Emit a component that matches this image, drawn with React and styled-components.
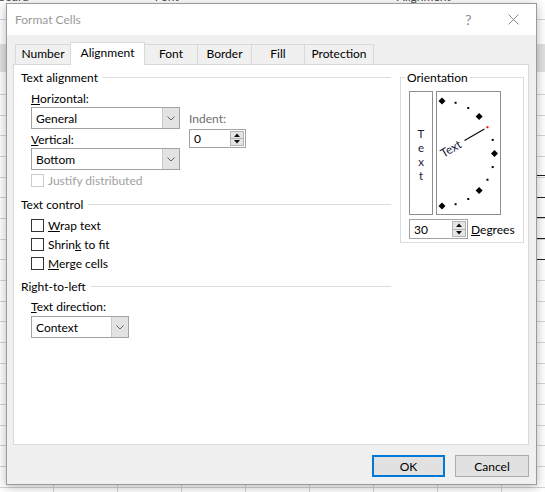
import React from 'react';
import styled, { createGlobalStyle } from 'styled-components';

const GlobalStyle = createGlobalStyle`
  html, body {
    margin: 0;
    padding: 0;
  }
  body {
    font-family: Lato, "Noto Sans", sans-serif;
    font-size: 12px;
    color: #000;
  }
`;

const cellLine = 'linear-gradient(#1e1e1e, #1e1e1e)';

// worksheet behind the dialog: header band, grid lines and a few bordered cells
const Sheet = styled.div`
  width: 545px;
  height: 492px;
  overflow: hidden;
  background-color: #fff;
  background-image:
    ${cellLine}, ${cellLine}, ${cellLine}, ${cellLine}, ${cellLine},
    linear-gradient(#e1e1e1, #e1e1e1),
    linear-gradient(#d4d4d4, #d4d4d4),
    repeating-linear-gradient(to bottom, #d4d4d4 0 1px, transparent 1px 20.67px),
    repeating-linear-gradient(to right, transparent 0 53px, #d4d4d4 53px 54px, transparent 54px 64px);
  background-size:
    9px 1px, 9px 1px, 9px 1px, 9px 1px, 9px 1px,
    100% 28px,
    100% 1px,
    100% 420px,
    100% 420px;
  background-position:
    537px 175px, 537px 197px, 537px 217px, 537px 238px, 537px 259px,
    0 44px,
    0 19px,
    0 94px,
    0 72px;
  background-repeat: no-repeat;
`;

const Ribbon = styled.div`
  height: 3px;
  overflow: hidden;
  display: flex;
  align-items: flex-start;
`;

const GroupLabel = styled.span`
  margin-left: ${(p) => p.$gap}px;
  margin-top: -10px;
  line-height: 14px;
  color: #444;
  white-space: nowrap;
`;

const Dialog = styled.div`
  margin-left: 6px;
  width: 531px;
  height: 482px;
  box-sizing: border-box;
  background: #f0f0f0;
  border: 1px solid #9b9b9b;
  box-shadow: 0 2px 10px rgba(0, 0, 0, 0.28);
  display: flex;
  flex-direction: column;
`;

const TitleBar = styled.div`
  height: 31px;
  background: #fff;
  display: flex;
  align-items: center;
  padding-left: 8px;
`;

const Title = styled.div`
  flex: 1;
  color: #999;
  font-size: 12px;
  margin-top: -1px;
`;

const CaptionButton = styled.div`
  width: 45px;
  height: 100%;
  display: flex;
  align-items: center;
  justify-content: center;
  color: #8a8a8a;
  font-size: 14px;
`;

const Body = styled.div`
  flex: 1;
  display: flex;
  flex-direction: column;
  padding: 7px 7px 0 6px;
`;

const TabRow = styled.div`
  display: flex;
  align-items: flex-end;
  height: 22px;
  padding-left: 2px;
`;

const Tab = styled.div`
  position: relative;
  box-sizing: border-box;
  width: ${(p) => p.$w}px;
  height: ${(p) => (p.$active ? 23 : 20)}px;
  margin-right: -1px;
  margin-bottom: ${(p) => (p.$active ? -1 : 0)}px;
  z-index: ${(p) => (p.$active ? 1 : 0)};
  background: ${(p) => (p.$active ? '#fff' : '#f0f0f0')};
  border: 1px solid #d9d9d9;
  border-bottom: none;
  display: flex;
  justify-content: center;
  padding-top: ${(p) => (p.$active ? 2 : 1)}px;
  line-height: 15px;
`;

const Panel = styled.div`
  height: 381px;
  box-sizing: border-box;
  background: #fff;
  border: 1px solid #d9d9d9;
  display: flex;
  padding: 5px 0 0 7px;
`;

const LeftCol = styled.div`
  width: 370px;
  display: flex;
  flex-direction: column;
`;

const SectionHead = styled.div`
  display: flex;
  align-items: center;
  line-height: 15px;
  margin-top: ${(p) => p.$top || 0}px;
`;

const Rule = styled.div`
  flex: 1;
  height: 1px;
  margin-left: 5px;
  background: #dcdcdc;
`;

const Indented = styled.div`
  padding-left: 10px;
  display: flex;
  flex-direction: column;
`;

const FieldLabel = styled.div`
  line-height: 15px;
  margin-top: ${(p) => p.$top || 0}px;
  color: ${(p) => p.$color || '#000'};
`;

const Key = styled.span`
  text-decoration: underline;
  text-underline-offset: 1px;
`;

const AlignRow = styled.div`
  display: flex;
`;

const Stack = styled.div`
  display: flex;
  flex-direction: column;
  margin-left: ${(p) => p.$left || 0}px;
`;

const Select = styled.div`
  box-sizing: border-box;
  width: ${(p) => p.$w}px;
  height: 22px;
  margin-top: ${(p) => p.$top || 0}px;
  border: 1px solid #a3a3a3;
  background: #fff;
  display: flex;
  align-items: center;
`;

const SelectValue = styled.div`
  flex: 1;
  padding-left: 4px;
`;

const SelectArrow = styled.div`
  width: 16px;
  height: 100%;
  background: #e3e3e3;
  border-left: 1px solid #c9c9c9;
  display: flex;
  align-items: center;
  justify-content: center;
`;

const Spinner = styled.div`
  box-sizing: border-box;
  width: ${(p) => p.$w}px;
  height: ${(p) => p.$h}px;
  margin-top: ${(p) => p.$top || 0}px;
  border: 1px solid #a3a3a3;
  background: #fff;
  display: flex;
  align-items: center;
  padding: 1px;
`;

const SpinValue = styled.div`
  flex: 1;
  padding-left: 3px;
`;

const SpinButtons = styled.div`
  width: 14px;
  height: 100%;
  display: flex;
  flex-direction: column;
`;

const SpinButton = styled.div`
  flex: 1;
  box-sizing: border-box;
  background: #e5e5e5;
  border: 1px solid #b4b4b4;
  margin-top: ${(p) => (p.$down ? -1 : 0)}px;
  display: flex;
  align-items: center;
  justify-content: center;
`;

const CheckRow = styled.div`
  display: flex;
  align-items: center;
  height: 15px;
  margin-top: ${(p) => p.$top || 0}px;
  color: ${(p) => (p.$disabled ? '#a0a0a0' : '#000')};
`;

const CheckBox = styled.div`
  box-sizing: border-box;
  width: 13px;
  height: 13px;
  border: 1px solid ${(p) => (p.$disabled ? '#cccccc' : '#333')};
  background: #fff;
  margin-right: 4px;
`;

const Orientation = styled.fieldset`
  box-sizing: border-box;
  width: 121px;
  margin: 0 0 0 9px;
  padding: 0 8px 3px;
  border: 1px solid #dcdcdc;
  align-self: flex-start;
`;

const Legend = styled.legend`
  padding: 0 2px;
  margin-left: -4px;
  line-height: 15px;
`;

const DialRow = styled.div`
  display: flex;
  gap: 3px;
  margin-top: 6px;
`;

const VerticalBox = styled.div`
  box-sizing: border-box;
  width: 24px;
  height: 124px;
  border: 1px solid #8e8e8e;
  display: flex;
  flex-direction: column;
  align-items: center;
  justify-content: center;
  padding-top: 3px;
  font-size: 11.5px;
  line-height: 14px;
  color: #1a1a40;
`;

const DialBox = styled.div`
  box-sizing: border-box;
  width: 65px;
  height: 124px;
  border: 1px solid #8e8e8e;
`;

const DegreesRow = styled.div`
  display: flex;
  align-items: center;
  margin-top: 4px;
  gap: 3px;
`;

const Footer = styled.div`
  display: flex;
  justify-content: flex-end;
  gap: 10px;
  padding-top: 10px;
`;

const Button = styled.div`
  box-sizing: border-box;
  width: ${(p) => (p.$default ? 73 : 74)}px;
  height: 22px;
  background: #e1e1e1;
  border: ${(p) => (p.$default ? '2px solid #0078d7' : '1px solid #adadad')};
  display: flex;
  align-items: center;
  justify-content: center;
`;

const Chevron = () => (
  <svg width="8" height="5" viewBox="0 0 8 5">
    <polyline points="0.5,0.5 4,4 7.5,0.5" fill="none" stroke="#606060" strokeWidth="1" />
  </svg>
);

const Triangle = ({ down }) => (
  <svg width="6" height="4" viewBox="0 0 6 4">
    <polygon points={down ? '0,0 6,0 3,3.5' : '3,0.5 6,4 0,4'} fill="#111" />
  </svg>
);

function Dropdown({ value, width, top }) {
  return (
    <Select $w={width} $top={top}>
      <SelectValue>{value}</SelectValue>
      <SelectArrow>
        <Chevron />
      </SelectArrow>
    </Select>
  );
}

function SpinBox({ value, width, height, top }) {
  return (
    <Spinner $w={width} $h={height} $top={top}>
      <SpinValue>{value}</SpinValue>
      <SpinButtons>
        <SpinButton>
          <Triangle />
        </SpinButton>
        <SpinButton $down>
          <Triangle down />
        </SpinButton>
      </SpinButtons>
    </Spinner>
  );
}

function Check({ children, top, disabled }) {
  return (
    <CheckRow $top={top} $disabled={disabled}>
      <CheckBox $disabled={disabled} />
      <span>{children}</span>
    </CheckRow>
  );
}

// half-circle dial: big diamonds every 45°, small dots every 15°, current angle in red
function Dial({ degrees }) {
  const cx = 5;
  const cy = 61.5;
  const r = 52.5;
  const marks = [];
  for (let a = 90; a >= -90; a -= 15) {
    const rad = (a * Math.PI) / 180;
    const x = cx + r * Math.cos(rad);
    const y = cy - r * Math.sin(rad);
    if (a % 45 === 0) {
      marks.push(
        <polygon
          key={a}
          points={`${x},${y - 3.5} ${x + 3.5},${y} ${x},${y + 3.5} ${x - 3.5},${y}`}
          fill="#000"
        />
      );
    } else {
      marks.push(
        <rect key={a} x={x - 1} y={y - 1} width="2" height="2" fill={a === degrees ? '#ff0000' : '#000'} />
      );
    }
  }
  return (
    <svg width="63" height="122" viewBox="0 0 63 122">
      {marks}
      <g transform={`rotate(${-degrees} ${cx} ${cy})`}>
        <text x={cx - 1} y={cy + 4.5} fontSize="12" fontFamily="Lato, sans-serif" fill="#1a1a40">
          Text
        </text>
        <line x1={cx + 26} y1={cy} x2={cx + 49} y2={cy} stroke="#000" strokeWidth="1" />
      </g>
    </svg>
  );
}

const tabs = [
  ['Number', 56],
  ['Alignment', 75],
  ['Font', 54],
  ['Border', 55],
  ['Fill', 54],
  ['Protection', 70],
];

export default function App() {
  return (
    <Sheet>
      <GlobalStyle />
      <Ribbon>
        <GroupLabel $gap={-22}>Clipboard</GroupLabel>
        <GroupLabel $gap={126}>Font</GroupLabel>
        <GroupLabel $gap={218}>Alignment</GroupLabel>
      </Ribbon>
      <Dialog>
        <TitleBar>
          <Title>Format Cells</Title>
          <CaptionButton>?</CaptionButton>
          <CaptionButton>
            <svg width="11" height="11" viewBox="0 0 11 11">
              <path d="M0.5 0.5 L10.5 10.5 M10.5 0.5 L0.5 10.5" stroke="#8a8a8a" strokeWidth="1" />
            </svg>
          </CaptionButton>
        </TitleBar>
        <Body>
          <TabRow>
            {tabs.map(([label, w]) => (
              <Tab key={label} $w={w} $active={label === 'Alignment'}>
                {label}
              </Tab>
            ))}
          </TabRow>
          <Panel>
            <LeftCol>
              <SectionHead>
                Text alignment
                <Rule />
              </SectionHead>
              <Indented>
                <AlignRow>
                  <Stack>
                    <FieldLabel $top={6}>
                      <Key>H</Key>orizontal:
                    </FieldLabel>
                    <Dropdown value="General" width={149} top={1} />
                    <FieldLabel $top={3}>
                      <Key>V</Key>ertical:
                    </FieldLabel>
                    <Dropdown value="Bottom" width={149} top={1} />
                  </Stack>
                  <Stack $left={9}>
                    <FieldLabel $top={26} $color="#6d6d6d">
                      Indent:
                    </FieldLabel>
                    <SpinBox value="0" width={57} height={19} top={3} />
                  </Stack>
                </AlignRow>
                <Check top={3} disabled>
                  Justify distributed
                </Check>
              </Indented>

              <SectionHead $top={9}>
                Text control
                <Rule />
              </SectionHead>
              <Indented>
                <Check top={6}>
                  <Key>W</Key>rap text
                </Check>
                <Check top={4}>
                  Shrin<Key>k</Key> to fit
                </Check>
                <Check top={4}>
                  <Key>M</Key>erge cells
                </Check>
              </Indented>

              <SectionHead $top={8}>
                Right-to-left
                <Rule />
              </SectionHead>
              <Indented>
                <FieldLabel $top={5}>
                  <Key>T</Key>ext direction:
                </FieldLabel>
                <Dropdown value="Context" width={98} top={2} />
              </Indented>
            </LeftCol>

            <Orientation>
              <Legend>Orientation</Legend>
              <DialRow>
                <VerticalBox>
                  <span>T</span>
                  <span>e</span>
                  <span>x</span>
                  <span>t</span>
                </VerticalBox>
                <DialBox>
                  <Dial degrees={30} />
                </DialBox>
              </DialRow>
              <DegreesRow>
                <SpinBox value="30" width={59} height={20} />
                <span>
                  <Key>D</Key>egrees
                </span>
              </DegreesRow>
            </Orientation>
          </Panel>
          <Footer>
            <Button $default>OK</Button>
            <Button>Cancel</Button>
          </Footer>
        </Body>
      </Dialog>
    </Sheet>
  );
}
